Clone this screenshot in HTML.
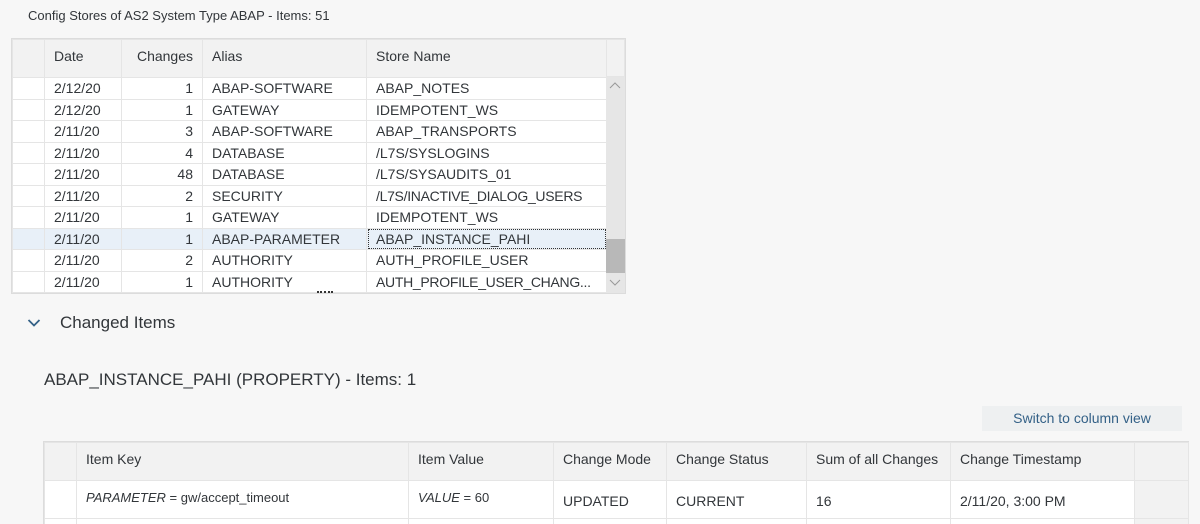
<!DOCTYPE html>
<html><head><meta charset="utf-8"><style>
*{margin:0;padding:0;box-sizing:border-box}
html,body{width:1200px;height:524px;overflow:hidden}
body{background:#f7f7f7;font-family:"Liberation Sans",Arial,sans-serif;color:#32363a;position:relative}
.a{position:absolute;white-space:nowrap}
table{border-collapse:collapse;position:absolute;table-layout:fixed}
td{border:1px solid #e5e5e5;font-size:14px;padding:0 9px;white-space:nowrap;overflow:hidden}
.h td{background:#f2f2f2;padding-bottom:6px}
.r{text-align:right}
</style></head><body>
<div class="a" style="left:28px;top:8px;font-size:13px">Config Stores of AS2 System Type ABAP - Items: 51</div>

<div class="a" style="left:11px;top:38px;width:615px;height:256px;border:1px solid #dcdcdc;background:#fff"></div>
<table style="left:12px;top:39px;width:594px">
<colgroup><col style="width:32px"><col style="width:77px"><col style="width:81px"><col style="width:164px"><col style="width:240px"></colgroup>
<tr class="h" style="height:38px"><td></td><td>Date</td><td class="r">Changes</td><td>Alias</td><td>Store Name</td></tr>
<tr style="height:21.5px"><td></td><td>2/12/20</td><td class="r">1</td><td>ABAP-SOFTWARE</td><td>ABAP_NOTES</td></tr>
<tr style="height:21.5px"><td></td><td>2/12/20</td><td class="r">1</td><td>GATEWAY</td><td>IDEMPOTENT_WS</td></tr>
<tr style="height:21.5px"><td></td><td>2/11/20</td><td class="r">3</td><td>ABAP-SOFTWARE</td><td>ABAP_TRANSPORTS</td></tr>
<tr style="height:21.5px"><td></td><td>2/11/20</td><td class="r">4</td><td>DATABASE</td><td>/L7S/SYSLOGINS</td></tr>
<tr style="height:21.5px"><td></td><td>2/11/20</td><td class="r">48</td><td>DATABASE</td><td>/L7S/SYSAUDITS_01</td></tr>
<tr style="height:21.5px"><td></td><td>2/11/20</td><td class="r">2</td><td>SECURITY</td><td style="letter-spacing:-0.3px">/L7S/INACTIVE_DIALOG_USERS</td></tr>
<tr style="height:21.5px"><td></td><td>2/11/20</td><td class="r">1</td><td>GATEWAY</td><td>IDEMPOTENT_WS</td></tr>
<tr style="height:21.5px;background:#e8f0f8"><td></td><td>2/11/20</td><td class="r">1</td><td>ABAP-PARAMETER</td><td style="outline:1px dotted #333;outline-offset:-2px">ABAP_INSTANCE_PAHI</td></tr>
<tr style="height:21.5px"><td></td><td>2/11/20</td><td class="r">2</td><td>AUTHORITY</td><td>AUTH_PROFILE_USER</td></tr>
<tr style="height:21.5px"><td></td><td>2/11/20</td><td class="r">1</td><td>AUTHORITY</td><td style="letter-spacing:-0.3px">AUTH_PROFILE_USER_CHANG...</td></tr>
</table>
<div class="a" style="left:606px;top:39px;width:19px;height:38px;background:#f2f2f2;border:1px solid #e5e5e5"></div>
<div class="a" style="left:606px;top:77px;width:19px;height:216px;background:#e6e6e6"></div>
<div class="a" style="left:606px;top:239px;width:19px;height:34px;background:#b8b8b8"></div>
<svg class="a" style="left:609px;top:82px" width="12" height="8"><path d="M1 6 L6 1 L11 6" stroke="#999" stroke-width="1" fill="none"/></svg>
<svg class="a" style="left:609px;top:279px" width="12" height="8"><path d="M1 1 L6 6 L11 1" stroke="#999" stroke-width="1" fill="none"/></svg>
<div class="a" style="left:317px;top:291px;width:16px;height:2px;border-top:2px dotted #333"></div>

<svg class="a" style="left:27px;top:318px" width="14" height="10"><path d="M1.5 2 L7 7.5 L12.5 2" stroke="#346187" stroke-width="1.8" fill="none"/></svg>
<div class="a" style="left:60px;top:313px;font-size:17px">Changed Items</div>
<div class="a" style="left:44px;top:370px;font-size:17px">ABAP_INSTANCE_PAHI (PROPERTY) - Items: 1</div>

<div class="a" style="left:982px;top:406px;width:200px;height:25px;background:#eef0f1;color:#346187;font-size:14px;text-align:center;line-height:25px">Switch to column view</div>

<div class="a" style="left:43px;top:441px;width:1146px;height:90px;border:1px solid #dcdcdc;background:#fff"></div>
<table style="left:44px;top:442px;width:1144px">
<colgroup><col style="width:32px"><col style="width:332px"><col style="width:145px"><col style="width:113px"><col style="width:140px"><col style="width:144px"><col style="width:184px"><col style="width:54px"></colgroup>
<tr class="h" style="height:38px"><td></td><td>Item Key</td><td>Item Value</td><td>Change Mode</td><td>Change Status</td><td>Sum of all Changes</td><td>Change Timestamp</td><td></td></tr>
<tr style="height:38px"><td></td><td style="font-size:13px;padding-bottom:4px"><i>PARAMETER</i> = gw/accept_timeout</td><td style="font-size:13px;padding-bottom:4px"><i>VALUE</i> = 60</td><td style="padding-top:2px">UPDATED</td><td style="padding-top:2px">CURRENT</td><td style="padding-top:2px">16</td><td style="padding-top:2px">2/11/20, 3:00 PM</td><td style="background:#f2f2f2"></td></tr>
<tr style="height:20px"><td></td><td></td><td></td><td></td><td></td><td></td><td></td><td style="background:#f2f2f2"></td></tr>
</table>
</body></html>
